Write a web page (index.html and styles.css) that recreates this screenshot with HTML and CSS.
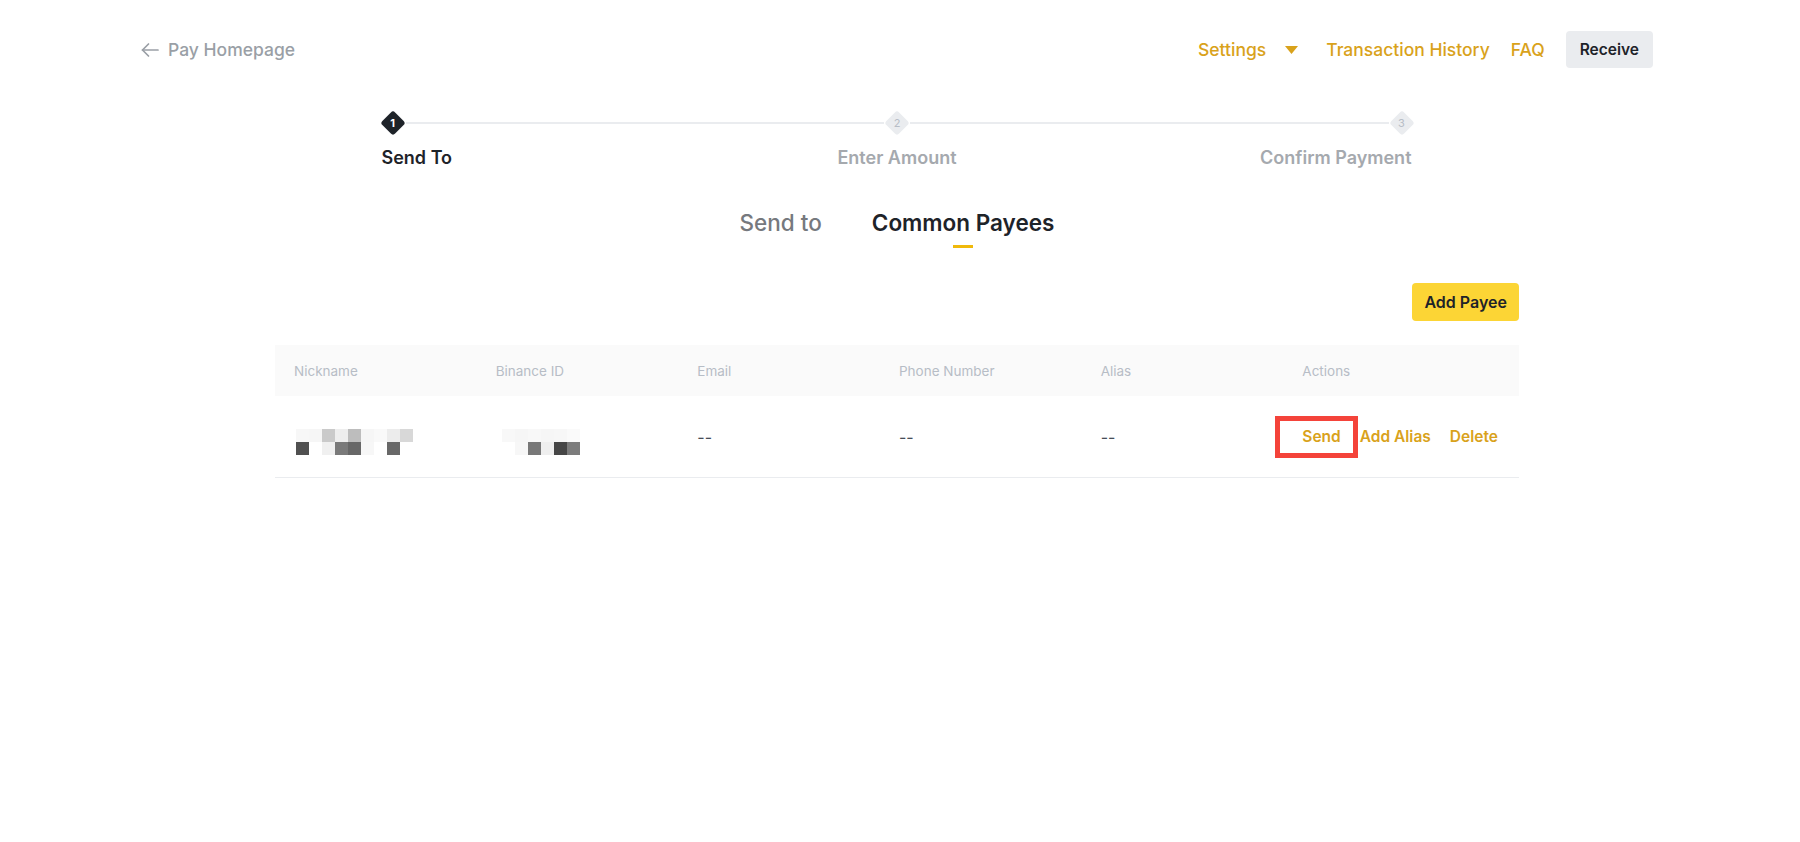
FILE: index.html
```html
<!DOCTYPE html>
<html lang="en">

<head>
    <meta charset="UTF-8">
    <meta name="viewport" content="width=device-width, initial-scale=1.0">
    <title>Pay - Send</title>
    <link rel="stylesheet" href="styles.css">
</head>

<body>
    <div class="page">

        <header class="top-bar">
            <a href="#" class="back-link">
                <svg width="18" height="16" viewBox="0 0 18 16" fill="none" stroke="#9a9fa6" stroke-width="1.7" stroke-linecap="round" stroke-linejoin="round">
                    <path d="M17 8H1.5"/>
                    <path d="M7.5 2L1.5 8l6 6"/>
                </svg>
                <span>Pay Homepage</span>
            </a>
            <nav class="top-nav">
                <a href="#" class="nav-link settings">Settings
                    <svg width="13" height="8" viewBox="0 0 13 8"><polygon points="0,0 13,0 6.5,8" fill="#d9a21b"/></svg>
                </a>
                <a href="#" class="nav-link">Transaction History</a>
                <a href="#" class="nav-link">FAQ</a>
                <button class="btn btn-grey">Receive</button>
            </nav>
        </header>

        <!-- step indicator -->
        <div class="steps">
            <div class="track">
                <div class="dot active"><span class="diamond"></span><span class="num">1</span></div>
                <div class="line"></div>
                <div class="dot"><span class="diamond"></span><span class="num">2</span></div>
                <div class="line"></div>
                <div class="dot"><span class="diamond"></span><span class="num">3</span></div>
            </div>
            <div class="labels">
                <div class="label first active">Send To</div>
                <div class="label">Enter Amount</div>
                <div class="label last">Confirm Payment</div>
            </div>
        </div>

        <div class="tabs">
            <div class="tab">Send to</div>
            <div class="tab selected">Common Payees</div>
        </div>

        <div class="content">
            <div class="toolbar">
                <button class="btn btn-yellow">Add Payee</button>
            </div>

            <div class="table">
                <div class="thead">
                    <div>Nickname</div>
                    <div>Binance ID</div>
                    <div>Email</div>
                    <div>Phone Number</div>
                    <div>Alias</div>
                    <div>Actions</div>
                </div>
                <div class="trow">
                    <div>
                        <div class="pix nick">
                            <i style="background:#f7f7f7"></i><i style="background:#f6f6f6"></i><i style="background:#cacaca"></i><i style="background:#eeeeee"></i><i style="background:#bdbdbd"></i><i style="background:#f6f6f6"></i><i style="background:#f9f9f9"></i><i style="background:#ececec"></i><i style="background:#d8d8d8"></i>
                            <i style="background:#505050"></i><i style="background:#ffffff"></i><i style="background:#f0f0f0"></i><i style="background:#7a7a7a"></i><i style="background:#676767"></i><i style="background:#f7f7f7"></i><i style="background:#ffffff"></i><i style="background:#686868"></i><i style="background:#ffffff"></i>
                        </div>
                    </div>
                    <div>
                        <div class="pix bid">
                            <i style="background:#f8f8f8"></i><i style="background:#f6f6f6"></i><i style="background:#f8f8f8"></i><i style="background:#f6f6f6"></i><i style="background:#f7f7f7"></i><i style="background:#fafafa"></i>
                            <i style="background:#ffffff"></i><i style="background:#f7f7f7"></i><i style="background:#787878"></i><i style="background:#efefef"></i><i style="background:#464646"></i><i style="background:#7c7c7c"></i>
                        </div>
                    </div>
                    <div class="dash">--</div>
                    <div class="dash">--</div>
                    <div class="dash">--</div>
                    <div class="actions">
                        <a href="#" class="act marked">Send</a>
                        <a href="#" class="act">Add Alias</a>
                        <a href="#" class="act">Delete</a>
                    </div>
                </div>
            </div>
        </div>

    </div>
</body>

</html>
```

FILE: styles.css
```css
body {
    font-family: Inter, "Liberation Sans", Arial, sans-serif;
    background-color: #fff;
    color: #1e2329;
    margin: 0;
    padding: 0 6px 0 0;
}

a {
    text-decoration: none;
}

button {
    font-family: inherit;
    border: none;
    cursor: pointer;
}

.page {
    width: 1512px;
    margin: 0 auto;
}

/* top bar */
.top-bar {
    display: flex;
    justify-content: space-between;
    align-items: center;
    padding-top: 31px;
}

.back-link {
    display: flex;
    align-items: center;
    gap: 9px;
    color: #9a9fa6;
    font-size: 17.5px;
    font-weight: 500;
}

.top-nav {
    display: flex;
    align-items: center;
}

.nav-link {
    color: #d9a21b;
    font-size: 17.5px;
    font-weight: 500;
    margin-right: 21px;
}

.nav-link.settings {
    display: flex;
    align-items: center;
    gap: 19px;
    margin-right: 28px;
}

.btn {
    height: 37px;
    border-radius: 4px;
    font-size: 15.5px;
    font-weight: 600;
    color: #1e2329;
}

.btn-grey {
    background-color: #eaecef;
    padding: 0 14px;
}

.btn-yellow {
    background-color: #fcd535;
    padding: 0 12px;
    font-size: 16px;
    height: 38px;
}

/* steps */
.steps {
    width: 1035px;
    margin: 42px auto 0;
}

.track {
    display: flex;
    align-items: center;
}

.dot {
    position: relative;
    width: 26px;
    height: 26px;
    display: flex;
    align-items: center;
    justify-content: center;
}

.diamond {
    position: absolute;
    width: 18px;
    height: 18px;
    border-radius: 3px;
    background-color: #eaecef;
    transform: rotate(45deg);
}

.num {
    position: relative;
    font-size: 11px;
    color: #b7bdc6;
}

.dot.active .diamond {
    background-color: #1e2329;
}

.dot.active .num {
    color: #fff;
    font-weight: 700;
}

.line {
    flex: 1;
    height: 2px;
    background-color: #eaecef;
}

.labels {
    display: grid;
    grid-template-columns: 1fr auto 1fr;
    margin-top: 11px;
}

.label {
    font-size: 18px;
    font-weight: 600;
    line-height: 22px;
    color: #a5a9ae;
}

.label.first {
    padding-left: 2px;
}

.label.last {
    text-align: right;
    padding-right: 3px;
}

.label.active {
    color: #1e2329;
}

/* tabs */
.tabs {
    display: flex;
    justify-content: center;
    gap: 50px;
    margin-top: 40px;
}

.tab {
    font-size: 22.5px;
    font-weight: 500;
    line-height: 28px;
    color: #76797e;
    padding-bottom: 11px;
}

.tab.selected {
    color: #1e2329;
    font-weight: 600;
    background: linear-gradient(#f0b90b, #f0b90b) no-repeat center bottom / 20px 3px;
}

/* payees */
.content {
    width: 1244px;
    margin: 0 auto;
}

.toolbar {
    display: flex;
    justify-content: flex-end;
    margin-top: 35px;
}

.table {
    margin-top: 24px;
}

.thead,
.trow {
    display: grid;
    grid-template-columns: repeat(6, 1fr);
    padding: 0 15px 0 19px;
    align-items: center;
}

.thead {
    height: 51px;
    background-color: #fafafa;
    font-size: 13.5px;
    color: #b7bdc6;
}

.trow {
    height: 81px;
    border-bottom: 1px solid #eaecef;
}

.dash {
    color: #474d57;
    font-size: 16px;
}

.pix {
    display: grid;
    grid-template-columns: repeat(9, 13px);
    grid-auto-rows: 13px;
    margin-top: 10px;
}

.pix.nick {
    margin-left: 2px;
}

.pix.bid {
    grid-template-columns: repeat(6, 13px);
    margin-left: 6px;
}

.actions {
    display: flex;
    gap: 19px;
}

.act {
    position: relative;
    color: #d9a21b;
    font-size: 15.5px;
    font-weight: 600;
    line-height: 20px;
}

/* annotation box round the Send link */
.act.marked::after {
    content: "";
    position: absolute;
    left: -27px;
    right: -17px;
    top: -11px;
    bottom: -11px;
    border: 5px solid #f4433a;
}
```
